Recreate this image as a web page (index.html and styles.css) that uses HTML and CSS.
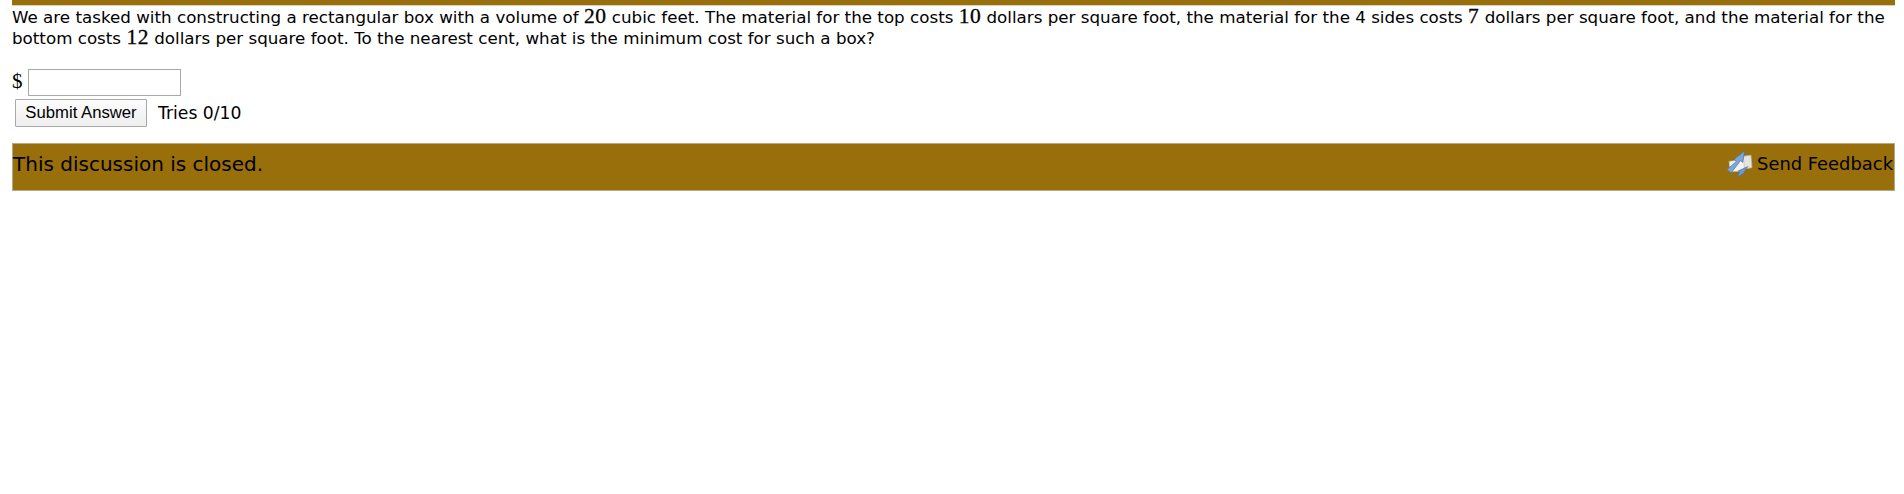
FILE: index.html
```html
<!DOCTYPE html>
<html lang="en">
<head>
  <meta charset="UTF-8" />
  <title>Problem</title>
  <link rel="stylesheet" href="styles.css">
</head>
<body>
  <div class="top-rule"></div>
  <p class="question">We are tasked with constructing a rectangular box with a volume of <span class="num">20</span> cubic feet. The material for the top costs <span class="num">10</span> dollars per square foot, the material for the 4 sides costs <span class="num">7</span> dollars per square foot, and the material for the bottom costs <span class="num">12</span> dollars per square foot. To the nearest cent, what is the minimum cost for such a box?</p>
  <div class="answer-row">
    <span class="dollar">$</span>
    <input class="answer" type="text">
  </div>
  <div class="submit-row">
    <button class="submit">Submit Answer</button>
    <span class="tries">Tries 0/10</span>
  </div>
  <div class="closed-bar">
    <span class="closed-text">This discussion is closed.</span>
    <span class="feedback">
      <svg class="feedback-icon" width="27" height="27" viewBox="0 0 26 26">
        <path d="M10 7 L24 5 L25 17 L12 19 Z" fill="#e4e4e0" stroke="#b9b9b4" stroke-width="0.7"/>
        <path d="M3 11 L17 9 L18 20 L4 21 Z" fill="#f4f4f2" stroke="#bdbdb8" stroke-width="0.7"/>
        <path d="M1 19 L10 11 L8 9 L18 1 L16 12 L14 10 L5 22 Z" fill="#7ea6d6" stroke="#4f7bb0" stroke-width="0.8"/>
        <path d="M11 26 L13 21 L12 20 L21 16 L17 21 L18 22 Z" fill="#6f9acb" stroke="#456fa3" stroke-width="0.6"/>
      </svg>
      Send Feedback
    </span>
  </div>
</body>
</html>
```

FILE: styles.css
```css
body {
  margin: 0 9px 0 12px;
  font-family: "DejaVu Sans", Verdana, sans-serif;
  font-size: 16.72px;
  color: #000;
  background: #fff;
}

.top-rule {
  height: 5px;
  background: #996f0c;
  border-bottom: 1px solid #d5d0c4;
}

.question {
  margin: 0;
  padding-top: 1px;
  line-height: 21px;
}

.num {
  font-family: "Liberation Serif", "Times New Roman", serif;
  font-size: 21.5px;
  letter-spacing: 0.5px;
  line-height: 0;
  -webkit-text-stroke: 0.3px #000;
}

.answer-row {
  display: flex;
  align-items: center;
  margin-top: 20px;
  height: 27px;
}

.dollar {
  width: 16px;
  padding-bottom: 3px;
  font-family: "Liberation Serif", "Times New Roman", serif;
  font-size: 21px;
}

.answer {
  box-sizing: border-box;
  width: 153px;
  height: 27px;
  margin: 0;
  border: 1px solid #a9a9a9;
  background: #fff;
}

.submit-row {
  display: flex;
  align-items: center;
  margin: 3px 0 0 3px;
}

.submit {
  box-sizing: border-box;
  width: 132px;
  height: 28px;
  padding: 0;
  font-family: "Liberation Sans", Arial, sans-serif;
  font-size: 16.7px;
  color: #000;
  background: linear-gradient(#fcfcfc, #efefef);
  border: 1px solid #a9a9a9;
  border-radius: 1px;
}

.tries {
  margin-left: 11px;
  font-size: 17.2px;
}

.closed-bar {
  display: flex;
  align-items: center;
  justify-content: space-between;
  box-sizing: border-box;
  height: 48px;
  margin-top: 16px;
  padding: 0 1px 7px 0;
  background: #996f0c;
  border: 1px solid #b5a98c;
}

.closed-text {
  font-size: 20px;
}

.feedback {
  display: flex;
  align-items: center;
  gap: 4px;
  font-size: 17.9px;
}
```
